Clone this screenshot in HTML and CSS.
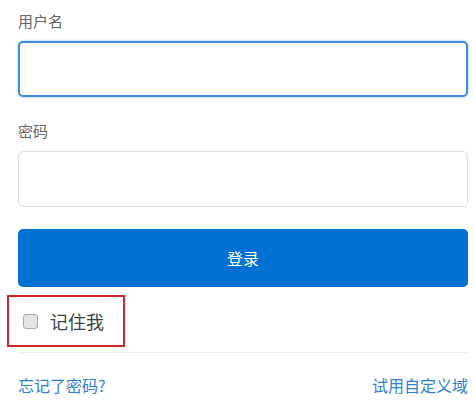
FILE: index.html
```html
<!DOCTYPE html>
<html lang="zh-CN">
<head>
    <meta charset="UTF-8">
    <meta name="viewport" content="width=device-width, initial-scale=1.0">
    <title>登录</title>
    <link rel="stylesheet" href="styles.css">
</head>
<body>
    <div class="login">
        <label class="field">
            <span class="txt-lbl">用户名</span>
            <input type="text" id="username" class="txt-input focused">
        </label>
        <label class="field">
            <span class="txt-lbl">密码</span>
            <input type="password" id="password" class="txt-input">
        </label>
        <button id="login-btn">登录</button>
        <label class="remember">
            <input type="checkbox" class="remember-box">
            <span>记住我</span>
        </label>
        <div class="links">
            <a href="#">忘记了密码?</a>
            <a href="#">试用自定义域</a>
        </div>
    </div>
</body>
</html>
```

FILE: styles.css
```css
* {
    box-sizing: border-box;
    margin: 0;
}
body {
    background: #fff;
    font-family: "Noto Sans CJK SC", "Noto Sans", sans-serif;
}
.login {
    padding: 11px 6px 0 18px;
}
.field {
    display: block;
    margin-bottom: 24px;
}
.txt-lbl { /*field captions*/
    display: block;
    font-size: 15px;
    line-height: 20px;
    color: #666;
    margin-bottom: 10px;
}
.txt-input {
    display: block;
    width: 100%;
    height: 56px;
    padding: 0 12px;
    border: solid 1px #d8dde6;
    border-radius: 5px;
    background: #fff;
    outline: none;
    font-size: 16px;
}
.txt-input.focused {
    border: solid 2px #3f8ee0;
    box-shadow: 0 0 3px #8fc0f0;
}
#login-btn {
    display: block;
    width: 100%;
    height: 58px;
    margin-top: -2px;
    border: none;
    border-radius: 5px;
    background-color: #0070d2;
    color: #fff;
    font-family: "Noto Sans CJK SC", sans-serif;
    font-size: 16px;
    cursor: pointer;
}
.remember { /*red box around the remember me row*/
    display: flex;
    align-items: center;
    width: 118px;
    height: 52px;
    margin: 8px 0 0 -11px;
    padding-left: 14px;
    border: solid 2px #d0262c;
    font-size: 18px;
    color: #3b3f48;
}
.remember-box {
    appearance: none;
    width: 15px;
    height: 15px;
    margin: 0 12px 0 0;
    border: solid 1px #a9a9a9;
    border-radius: 3px;
    background: #e4e4e4;
}
.links {
    display: flex;
    justify-content: space-between;
    margin-top: 5px;
    padding-top: 22px;
    border-top: solid 1px #ececec;
    font-size: 16px;
    line-height: 20px;
}
.links a {
    color: #2f7fd4;
    text-decoration: none;
}
```
